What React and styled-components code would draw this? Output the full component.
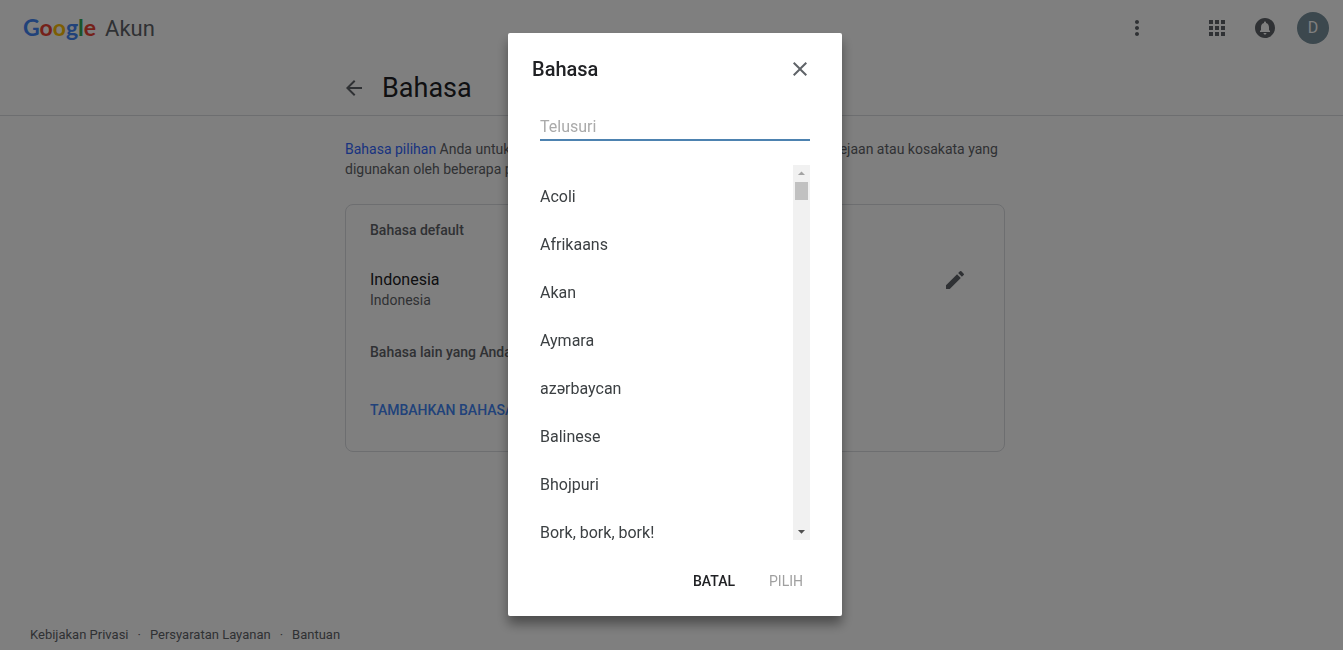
import React, { useRef, useState } from "react";
import styled, { createGlobalStyle } from "styled-components";
import {
  MdApps,
  MdArrowBack,
  MdArrowDropDown,
  MdArrowDropUp,
  MdCircleNotifications,
  MdClose,
  MdEdit,
  MdMoreVert,
} from "react-icons/md";

const LANGUAGES = [
  "Acoli",
  "Afrikaans",
  "Akan",
  "Aymara",
  "azərbaycan",
  "Balinese",
  "Bhojpuri",
  "Bork, bork, bork!",
];

const LOGO = [
  ["G", "#4285f4"],
  ["o", "#ea4335"],
  ["o", "#fbbc05"],
  ["g", "#4285f4"],
  ["l", "#34a853"],
  ["e", "#ea4335"],
];

const TopBar = () => (
  <Bar>
    <LogoLink href="#">
      <Wordmark>
        {LOGO.map(([letter, color], i) => (
          <Letter key={i} $color={color}>
            {letter}
          </Letter>
        ))}
      </Wordmark>
      <Product>Akun</Product>
    </LogoLink>
    <BarActions>
      <MoreButton aria-label="Menu lainnya">
        <MdMoreVert size={24} />
      </MoreButton>
      <IconButton aria-label="Aplikasi Google">
        <MdApps size={24} />
      </IconButton>
      <IconButton aria-label="Notifikasi">
        <MdCircleNotifications size={24} />
      </IconButton>
      <Avatar aria-label="Akun Google">D</Avatar>
    </BarActions>
  </Bar>
);

const LanguageSettings = () => (
  <Content>
    <Intro>
      <a href="#">Bahasa pilihan</a> Anda untuk layanan Google. Setelan ini juga
      menentukan variasi ejaan atau kosakata yang digunakan oleh beberapa
      produk.
    </Intro>
    <Card>
      <CardLabel>Bahasa default</CardLabel>
      <Language>
        <LanguageText>
          <LanguageName>Indonesia</LanguageName>
          <LanguageRegion>Indonesia</LanguageRegion>
        </LanguageText>
        <IconButton aria-label="Edit bahasa">
          <MdEdit size={24} />
        </IconButton>
      </Language>
      <CardLabel>Bahasa lain yang Anda pahami</CardLabel>
      <AddButton>TAMBAHKAN BAHASA LAIN</AddButton>
    </Card>
  </Content>
);

const LanguageDialog = () => {
  const listRef = useRef(null);
  const [query, setQuery] = useState("");

  const scroll = (delta) => {
    listRef.current.scrollTop += delta;
  };

  const shown = LANGUAGES.filter((name) =>
    name.toLowerCase().includes(query.toLowerCase())
  );

  return (
    <Overlay>
      <Dialog role="dialog" aria-modal="true" aria-labelledby="dialog-title">
        <DialogHeader>
          <DialogTitle id="dialog-title">Bahasa</DialogTitle>
          <IconButton aria-label="Tutup">
            <MdClose size={24} />
          </IconButton>
        </DialogHeader>
        <Search
          type="text"
          placeholder="Telusuri"
          aria-label="Telusuri"
          value={query}
          onChange={(e) => setQuery(e.target.value)}
        />
        <ListArea>
          <List ref={listRef}>
            {shown.map((name) => (
              <li key={name}>
                <Option>{name}</Option>
              </li>
            ))}
          </List>
          <Scrollbar>
            <ScrollButton
              $color="#a3a3a3"
              aria-label="Gulir ke atas"
              onClick={() => scroll(-48)}
            >
              <MdArrowDropUp size={17} />
            </ScrollButton>
            <Thumb />
            <ScrollButton
              $color="#505050"
              aria-label="Gulir ke bawah"
              onClick={() => scroll(48)}
            >
              <MdArrowDropDown size={17} />
            </ScrollButton>
          </Scrollbar>
        </ListArea>
        <DialogActions>
          <ActionButton>BATAL</ActionButton>
          <ActionButton disabled>PILIH</ActionButton>
        </DialogActions>
      </Dialog>
    </Overlay>
  );
};

const App = () => (
  <>
    <GlobalStyle />
    <Page>
      <TopBar />
      <TitleBar>
        <TitleInner>
          <BackButton aria-label="Kembali">
            <MdArrowBack size={24} />
          </BackButton>
          <Title>Bahasa</Title>
        </TitleInner>
      </TitleBar>
      <LanguageSettings />
      <Footer>
        <a href="#">Kebijakan Privasi</a>
        <span>·</span>
        <a href="#">Persyaratan Layanan</a>
        <span>·</span>
        <a href="#">Bantuan</a>
      </Footer>
    </Page>
    <LanguageDialog />
  </>
);

export default App;

const GlobalStyle = createGlobalStyle`
  * {
    box-sizing: border-box;
  }
  body {
    margin: 0;
    background: #fff;
    color: #3c4043;
    font-family: Roboto, "Noto Sans", sans-serif;
    font-size: 14px;
    line-height: 20px;
  }
  h1, h2, h3, p, ul {
    margin: 0;
    padding: 0;
  }
  a {
    text-decoration: none;
    color: inherit;
  }
  button {
    border: none;
    padding: 0;
    background: transparent;
    color: inherit;
    font: inherit;
    cursor: pointer;
  }
`;

const Page = styled.div`
  min-height: 100vh;
  display: flex;
  flex-direction: column;
`;

const Bar = styled.header`
  height: 56px;
  padding: 0 14px 0 23px;
  display: flex;
  align-items: center;
  justify-content: space-between;
`;

const LogoLink = styled.a`
  display: flex;
  align-items: baseline;
  gap: 9px;
  line-height: 32px;
`;

const Wordmark = styled.span`
  font-family: Lato, sans-serif;
  font-size: 23px;
  font-weight: 700;
`;

const Letter = styled.span`
  color: ${(props) => props.$color};
`;

const Product = styled.span`
  color: #5f6368;
  font-size: 22px;
`;

const BarActions = styled.div`
  display: flex;
  align-items: center;
  gap: 24px;
`;

const IconButton = styled.button`
  width: 24px;
  height: 24px;
  display: flex;
  color: #5f6368;
`;

const MoreButton = styled(IconButton)`
  margin-right: 32px;
`;

const BackButton = styled(IconButton)`
  margin-left: -3px;
`;

const Avatar = styled.button`
  width: 32px;
  height: 32px;
  margin-left: -4px;
  border-radius: 50%;
  background: #78909c;
  color: #fff;
  font-size: 16px;
`;

const TitleBar = styled.div`
  height: 60px;
  padding: 4px 0 0 7px;
  border-bottom: 1px solid #dadce0;
`;

const TitleInner = styled.div`
  max-width: 660px;
  height: 100%;
  margin: 0 auto;
  display: flex;
  align-items: center;
  gap: 16px;
`;

const Title = styled.h1`
  color: #202124;
  font-size: 27px;
  font-weight: 400;
  line-height: 36px;
`;

const Content = styled.main`
  flex: 1;
  width: 100%;
  padding: 23px 0 24px 7px;
`;

const Intro = styled.p`
  max-width: 660px;
  margin: 0 auto 25px;
  color: #5f6368;
  a {
    color: #3367ff;
  }
`;

const Card = styled.section`
  max-width: 660px;
  margin: 0 auto;
  padding: 15px 37px 31px 24px;
  border: 1px solid #dadce0;
  border-radius: 8px;
`;

const CardLabel = styled.h3`
  color: #5f6368;
  font-size: 14px;
  font-weight: 500;
`;

const Language = styled.div`
  display: flex;
  justify-content: space-between;
  padding: 28px 0 32px;
`;

const LanguageText = styled.div`
  padding-top: 2px;
`;

const LanguageName = styled.div`
  color: #202124;
  font-size: 16px;
`;

const LanguageRegion = styled.div`
  color: #5f6368;
`;

const AddButton = styled.button`
  display: block;
  margin-top: 38px;
  color: #4285f4;
  font-weight: 500;
`;

const Footer = styled.footer`
  padding: 0 30px 5px;
  display: flex;
  gap: 9px;
  color: #5f6368;
  font-size: 13px;
`;

const Overlay = styled.div`
  position: fixed;
  inset: 0;
  padding: 33px 0 34px 7px;
  display: flex;
  justify-content: center;
  align-items: center;
  background: rgba(0, 0, 0, 0.5);
`;

const Dialog = styled.div`
  width: 334px;
  max-height: 100%;
  display: flex;
  flex-direction: column;
  padding: 24px 32px 17px;
  border-radius: 2px;
  background: #fff;
  box-shadow: 0 8px 12px rgba(0, 0, 0, 0.4);
`;

const DialogHeader = styled.div`
  display: flex;
  align-items: center;
  justify-content: space-between;
  margin: 0 -2px 0 -8px;
`;

const DialogTitle = styled.h2`
  color: #202124;
  font-size: 20px;
  font-weight: 500;
  line-height: 24px;
`;

const Search = styled.input`
  width: 100%;
  flex: none;
  height: 32px;
  margin: 28px 0 24px;
  padding: 4px 0 0;
  border: none;
  border-bottom: 2px solid #4d82b0;
  outline: none;
  color: #3c4043;
  font-family: inherit;
  font-size: 16px;
  &::placeholder {
    color: #aaa;
  }
`;

const ListArea = styled.div`
  display: flex;
  min-height: 0;
`;

const List = styled.ul`
  flex: 1;
  padding: 8px 0;
  overflow-y: auto;
  scrollbar-width: none;
  list-style: none;
`;

const Option = styled.button`
  width: 100%;
  height: 48px;
  color: #3c4043;
  font-size: 16px;
  text-align: left;
`;

const Scrollbar = styled.div`
  width: 17px;
  display: flex;
  flex-direction: column;
  background: #f1f1f1;
`;

const ScrollButton = styled.button`
  height: 17px;
  display: flex;
  color: ${(props) => props.$color};
`;

const Thumb = styled.div`
  height: 18px;
  margin: 0 2px auto;
  background: #c1c1c1;
`;

const DialogActions = styled.div`
  display: flex;
  justify-content: flex-end;
  gap: 16px;
  margin: 23px -2px 0 0;
`;

const ActionButton = styled.button`
  height: 36px;
  padding: 0 9px;
  color: #202124;
  font-weight: 500;
  &:disabled {
    color: #a0a0a0;
    font-weight: 400;
  }
`;
